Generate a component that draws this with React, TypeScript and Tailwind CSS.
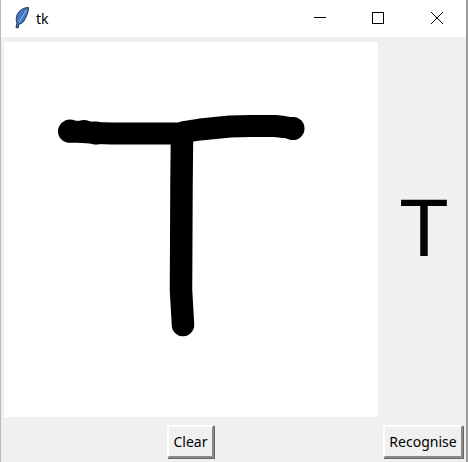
export default function App() {
  const btn =
    "flex h-[33px] items-center justify-center border-2 border-t-white border-l-white border-r-[#8a8a8a] border-b-[#8a8a8a] bg-[#f0f0f0] text-[14px] leading-none text-black shadow-[1px_1px_0_#696969] font-['Noto_Sans',sans-serif]";
  return (
    <div className="flex h-[462px] w-[468px] flex-col overflow-hidden border-r-2 border-l border-r-[#9a9a9a] border-l-[#b8b8b8] bg-[#f0f0f0]">
      <div className="flex h-[37px] shrink-0 items-center bg-white">
        <svg width="16" height="22" viewBox="0 0 16 22" className="ml-[13px] mt-[-1px]">
          <path d="M14.5 0.5 C10 0.5 5 3 3 8 C2 11 2 14 3 16 L2 20.5 L4 21 L5 17 C8 17 10.5 14 12 10 C13.5 7 14.5 4 14.5 0.5 Z" fill="#3f76c4" stroke="#2b3448" strokeWidth="1" />
          <path d="M12.5 3 L5 15" stroke="#9fc2ec" strokeWidth="1" fill="none" />
        </svg>
        <span className="ml-[6px] text-[14px] leading-none text-black font-['Noto_Sans',sans-serif]">tk</span>
        <div className="ml-auto flex h-full items-center">
          <svg width="58" height="37" viewBox="0 0 58 37" shapeRendering="crispEdges">
            <path d="M21 17.5 H33" stroke="#000" strokeWidth="1" fill="none" />
          </svg>
          <svg width="58" height="37" viewBox="0 0 58 37" shapeRendering="crispEdges">
            <rect x="21.5" y="12.5" width="11" height="11" stroke="#000" strokeWidth="1" fill="none" />
          </svg>
          <svg width="58" height="37" viewBox="0 0 58 37" className="mr-[-1px]">
            <path d="M22 12 L34 24 M34 12 L22 24" stroke="#000" strokeWidth="1" fill="none" />
          </svg>
        </div>
      </div>
      <div className="flex h-[380px] shrink-0 pt-[5px]">
        <div className="ml-[3px] h-[375px] w-[374px] shrink-0 bg-white">
          <svg width="374" height="375" viewBox="4 42 374 375">
            <path
              d="M69 131.5 L83 132 L97 133 L112 133.5 L180 133.5 L184 132 L200 129.5 L215 128 L230 126.5 L250 126 L275 126 L284 127 L293 128.5"
              fill="none"
              stroke="#000"
              strokeWidth="22"
              strokeLinecap="round"
              strokeLinejoin="round"
            />
            <circle cx="70" cy="131" r="11.5" fill="#000" />
            <circle cx="84" cy="131.5" r="11.5" fill="#000" />
            <circle cx="96" cy="133" r="11.5" fill="#000" />
            <circle cx="293" cy="128.5" r="11.5" fill="#000" />
            <path
              d="M182 134 L181.5 185 L181 290 L183 325"
              fill="none"
              stroke="#000"
              strokeWidth="22.5"
              strokeLinecap="round"
              strokeLinejoin="round"
            />
          </svg>
        </div>
        <div className="flex flex-1 items-center justify-center pb-[3px] pl-[4px] text-[81px] leading-none text-black font-['Liberation_Sans',sans-serif]">
          T
        </div>
      </div>
      <div className="relative flex flex-1 pt-[8px]">
        <div className="ml-[166px] w-[47px]">
          <button className={`${btn} w-[47px]`}>Clear</button>
        </div>
        <div className="ml-[169px] w-[80px]">
          <button className={`${btn} w-[80px]`}>Recognise</button>
        </div>
      </div>
    </div>
  );
}
